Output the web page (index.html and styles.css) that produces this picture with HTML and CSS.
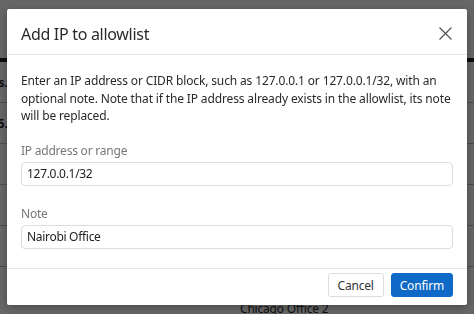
FILE: index.html
```html
<!DOCTYPE html>
<html lang="en">
<head>
    <meta charset="UTF-8">
    <meta name="viewport" content="width=device-width, initial-scale=1.0">
    <title>IP allowlist</title>
    <link rel="stylesheet" href="styles.css">
</head>
<body>
    <!-- page behind the dialog -->
    <div class="page">
        <div class="page-head"></div>
        <div class="row"><span class="cell-a">IPs.</span><span class="cell-b">Office</span></div>
        <div class="row"><span class="cell-a">10.0.0.5.</span><span class="cell-b">Berlin Office</span></div>
        <div class="row"><span class="cell-a"></span><span class="cell-b">London Office</span></div>
        <div class="row"><span class="cell-a"></span><span class="cell-b">Paris Office</span></div>
        <div class="row"><span class="cell-a"></span><span class="cell-b">Tokyo Office</span></div>
        <div class="row last"><span class="cell-a"></span><span class="cell-b">Chicago Office 2</span></div>
    </div>

    <div class="backdrop">
        <div class="modal">
            <div class="modal-header">
                <h2>Add IP to allowlist</h2>
                <button class="close" aria-label="Close">
                    <svg width="13" height="13" viewBox="0 0 13 13">
                        <path d="M0.5 0.5 L12.5 12.5 M12.5 0.5 L0.5 12.5" stroke="#555" stroke-width="1.2" fill="none"/>
                    </svg>
                </button>
            </div>
            <div class="modal-body">
                <p class="intro">Enter an IP address or CIDR block, such as 127.0.0.1 or 127.0.0.1/32, with an optional note. Note that if the IP address already exists in the allowlist, its note will be replaced.</p>
                <label for="ip">IP address or range</label>
                <input type="text" id="ip" value="127.0.0.1/32">
                <label for="note">Note</label>
                <input type="text" id="note" value="Nairobi Office">
            </div>
            <div class="modal-footer">
                <button class="btn">Cancel</button>
                <button class="btn primary">Confirm</button>
            </div>
        </div>
    </div>
</body>
</html>
```

FILE: styles.css
```css
body {
    font-family: "Noto Sans", "Open Sans", sans-serif;
    margin: 0;
    background-color: #fff;
    color: #2a2a2a;
    overflow: hidden;
}
.page {
    height: 314px;
}
.page-head {
    height: 58px;
    border-bottom: 4px solid #222;
}
.row {
    display: flex;
    height: 40px;
    align-items: center;
    border-bottom: 1px solid #bbb;
    font-size: 12px;
}
.row.last {
    border-bottom: none;
    align-items: flex-end;
    height: 50px;
}
.cell-a {
    width: 240px;
    text-align: right;
    margin-left: -232px;
    padding-right: 8px;
    font-weight: bold;
}
.cell-b {
    padding-left: 224px;
    letter-spacing: -0.2px;
}
.backdrop {
    position: fixed;
    top: 0;
    left: 0;
    right: 0;
    bottom: 0;
    background-color: rgba(0, 0, 0, 0.6);
    display: flex;
    align-items: center;
    justify-content: center;
}
.modal {
    width: 460px;
    height: 296px;
    background-color: #fff;
    border-radius: 2px;
    box-shadow: 0 2px 8px rgba(0,0,0,0.3);
    display: flex;
    flex-direction: column;
}
.modal-header {
    height: 53px;
    padding: 4px 14px 0;
    display: flex;
    align-items: center;
    justify-content: space-between;
    border-bottom: 1px solid #e8e8e8;
    box-sizing: border-box;
}
.modal-header h2 {
    margin: 0;
    font-size: 16px;
    font-weight: normal;
    letter-spacing: -0.3px;
    color: #2a2a2a;
}
.close {
    border: none;
    background: none;
    padding: 0;
    margin-right: 1px;
    width: 13px;
    height: 13px;
    display: flex;
}
.modal-body {
    flex: 1;
    padding: 17px 14px 0;
    border-bottom: 1px solid #e8e8e8;
}
.intro {
    margin: 0 0 17px;
    font-size: 12px;
    line-height: 17.5px;
    letter-spacing: -0.14px;
}
label {
    display: block;
    font-size: 12px;
    line-height: 18px;
    letter-spacing: -0.22px;
    color: #777;
    margin-bottom: 2px;
}
input[type="text"] {
    display: block;
    width: 100%;
    height: 24px;
    box-sizing: border-box;
    border: 1px solid #ddd;
    border-radius: 4px;
    padding: 0 5px;
    font-family: inherit;
    font-size: 12px;
    letter-spacing: -0.3px;
    color: #222;
    margin-bottom: 19px;
}
.modal-footer {
    height: 42px;
    padding: 0 14px 3px;
    display: flex;
    justify-content: flex-end;
    align-items: center;
    gap: 7px;
    box-sizing: border-box;
}
.btn {
    height: 24px;
    padding: 0 9px;
    font-family: inherit;
    font-size: 12px;
    letter-spacing: -0.2px;
    border: 1px solid #ddd;
    border-radius: 3px;
    background-color: #fff;
    color: #333;
}
.btn.primary {
    background-color: #0e6ac6;
    border-color: #0e6ac6;
    color: #fff;
    padding: 0 8px;
}
```
